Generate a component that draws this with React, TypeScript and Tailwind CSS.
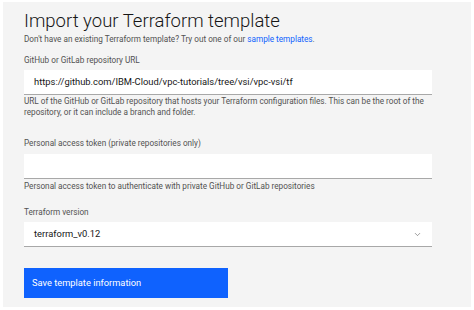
import { ChevronDown } from 'lucide-react';

function Field({ label, children }: { label: string; children: React.ReactNode }) {
  return (
    <div>
      <div className="text-[8.2px] leading-[12px] text-[#525252]">{label}</div>
      {children}
    </div>
  );
}

export default function App() {
  return (
    <div
      className="w-[474px] h-[310px] bg-white pt-[2px] px-[3px] pb-[3px]"
      style={{ fontFamily: 'Roboto, "Liberation Sans", sans-serif' }}
    >
      <div className="h-full bg-[#f4f4f4] pl-[21px] pt-[8px]">
        <h1 className="text-[18.5px] font-light leading-[23px] text-[#161616]">Import your Terraform template</h1>
        <p className="text-[8.2px] leading-[12px] text-[#525252]">
          Don't have an existing Terraform template? Try out one of our{' '}
          <span className="text-[#0f62fe]">sample templates</span>.
        </p>

        <div className="mt-[9px]">
          <Field label="GitHub or GitLab repository URL">
            <div className="mt-[4px] w-[408px] h-[25px] bg-white border-b border-[#a8a8a8] flex items-center pl-[10px] text-[9.4px] text-[#161616]">
              https://github.com/IBM-Cloud/vpc-tutorials/tree/vsi/vpc-vsi/tf
            </div>
            <p className="mt-[1px] w-[410px] text-[8.2px] leading-[11px] text-[#525252]">
              URL of the GitHub or GitLab repository that hosts your Terraform configuration files. This can be the root of the repository, or it can include a branch and folder.
            </p>
          </Field>
        </div>

        <div className="mt-[19px]">
          <Field label="Personal access token (private repositories only)">
            <div className="mt-[5px] w-[408px] h-[25px] bg-white border-b border-[#a8a8a8]" />
            <p className="mt-[1px] text-[8.2px] leading-[12px] text-[#525252]">
              Personal access token to authenticate with private GitHub or GitLab repositories
            </p>
          </Field>
        </div>

        <div className="mt-[14px]">
          <Field label="Terraform version">
            <div className="mt-[4px] w-[408px] h-[25px] bg-white border-b border-[#a8a8a8] flex items-center justify-between pl-[10px] pr-[10px] text-[9.4px] text-[#161616]">
              <span>terraform_v0.12</span>
              <ChevronDown className="w-[9px] h-[9px] text-[#525252]" strokeWidth={1.5} />
            </div>
          </Field>
        </div>

        <button className="mt-[21px] w-[204px] h-[30px] bg-[#0f62fe] text-left pl-[8px] text-[9.3px] text-white">
          Save template information
        </button>
      </div>
    </div>
  );
}
